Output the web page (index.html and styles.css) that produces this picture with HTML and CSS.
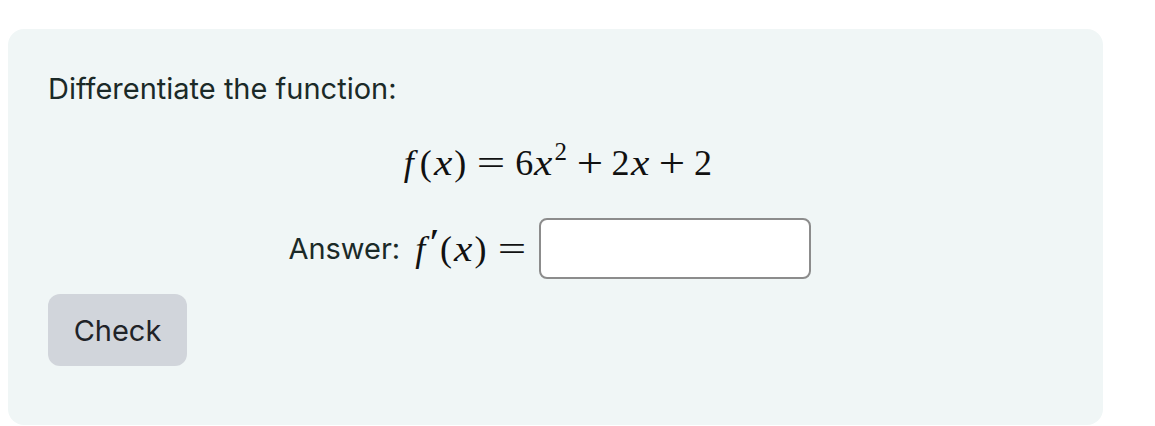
FILE: index.html
```html
<!DOCTYPE html>
<html lang="en">
<head>
<meta charset="utf-8">
<title>Differentiate</title>
<link rel="stylesheet" href="styles.css">
</head>
<body>
<div class="page">
  <div class="card">
    <p class="prompt">Differentiate the function:</p>
    <div class="display">
      <span class="math"><span class="mi f">f</span><span class="mo">(</span><span class="mi x">x</span><span class="mo">)</span><span class="rel">=</span><span class="mn">6</span><span class="mi x">x</span><span class="sup">2</span><span class="bin">+</span><span class="mn">2</span><span class="mi x">x</span><span class="bin">+</span><span class="mn">2</span></span>
    </div>
    <div class="answer-row">
      <span class="label">Answer:</span>
      <span class="math"><span class="mi f">f</span><span class="prime">′</span><span class="mo">(</span><span class="mi x">x</span><span class="mo">)</span><span class="rel last">=</span></span>
      <input class="answer-input" type="text" aria-label="answer">
    </div>
    <button class="check" type="button">Check</button>
  </div>
</div>
</body>
</html>
```
FILE: styles.css
```css
html, body {
  margin: 0;
  padding: 0;
  background: #ffffff;
}
.page {
  padding: 29px 0 0 8px;
}
.card {
  box-sizing: border-box;
  width: 1095px;
  height: 396px;
  padding: 40px 40px 0 40px;
  background: #f0f6f6;
  border-radius: 16px;
  color: #1b2a28;
  font-family: Inter, "Noto Sans", sans-serif;
  font-size: 29px;
  display: flex;
  flex-direction: column;
}
.prompt {
  margin: 0;
  line-height: 40px;
  height: 40px;
}
.display {
  margin-top: 31px;
  height: 50px;
  display: flex;
  justify-content: center;
  align-items: center;
}
.math {
  font-family: "Liberation Serif", "DejaVu Serif", serif;
  font-size: 36px;
  line-height: 42px;
  color: #111111;
  white-space: nowrap;
}
.math > span {
  display: inline-block;
  text-align: center;
}
.mi {
  font-style: italic;
}
.mi.f {
  width: 0.55em;
}
.mi.x {
  width: 0.572em;
  transform: scaleX(1.15);
}
.mo {
  width: 0.389em;
}
.mn {
  width: 0.5em;
}
.rel {
  width: 0.778em;
  margin: 0 0.278em;
  transform: scaleX(1.4);
}
.rel.last {
  margin-right: 0;
}
.bin {
  width: 0.778em;
  margin: 0 0.222em;
  transform: scale(1.3, 1.15);
}
.sup {
  font-size: 25px;
  position: relative;
  top: -15px;
  width: 0.55em;
}
.prime {
  width: 9px;
  font-size: 38px;
  line-height: 42px;
  position: relative;
  top: -6px;
  transform: scaleX(1.2);
}
.answer-row {
  margin-top: 28px;
  display: flex;
  justify-content: center;
  align-items: center;
  padding-right: 12px;
}
.label {
  margin-right: 10px;
}
.answer-input {
  box-sizing: border-box;
  width: 272px;
  height: 61px;
  margin-left: 13px;
  border: 2px solid #8c8c8c;
  border-radius: 8px;
  background: #ffffff;
}
.check {
  margin-top: 15px;
  align-self: flex-start;
  box-sizing: border-box;
  width: 139px;
  height: 72px;
  border: none;
  border-radius: 12px;
  background: #d1d5db;
  color: #1f2328;
  font-family: Inter, "Noto Sans", sans-serif;
  font-size: 29px;
  padding: 0;
}
```
